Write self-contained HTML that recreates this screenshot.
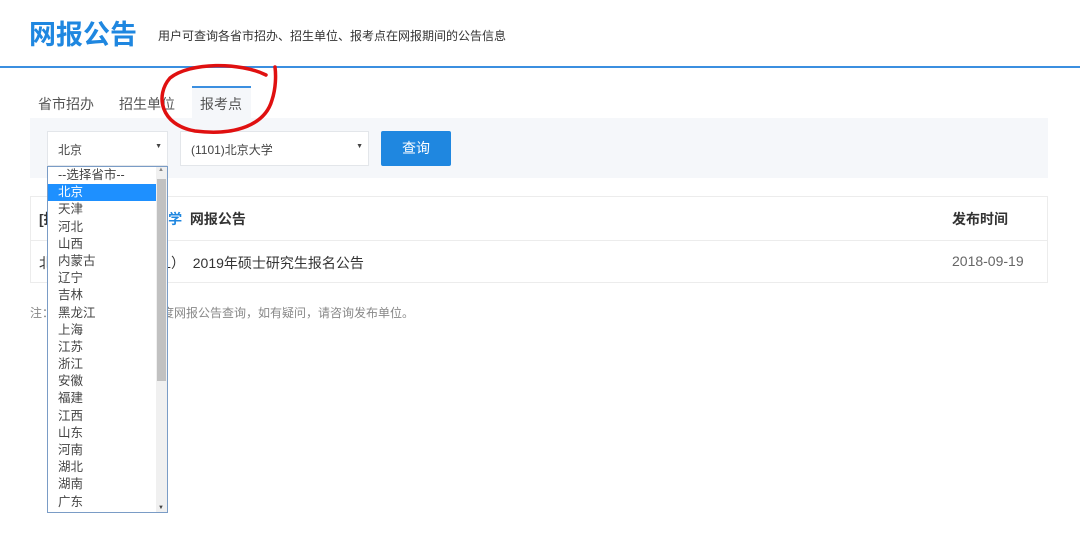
<!DOCTYPE html>
<html><head><meta charset="utf-8"><style>
*{margin:0;padding:0;box-sizing:border-box}
body{width:1080px;height:552px;background:#fff;font-family:"Liberation Sans","Noto Sans CJK SC",sans-serif;position:relative;overflow:hidden;color:#333}
.abs{position:absolute}
.title{left:29px;top:13px;font-size:27px;font-weight:bold;color:#1f87e0}
.sub{left:158px;top:27px;font-size:12px;color:#333}
.line{left:0;top:66px;width:1080px;height:2px;background:#3b8fe0}
.tab{top:94px;font-size:14px;color:#555}
.active{left:192px;top:86px;width:59px;height:32px;background:#f5f7fa;border-top:2px solid #3b8fe0}
.panel{left:30px;top:118px;width:1018px;height:60px;background:#f5f7fa}
.sel{top:131px;height:35px;background:#fff;border:1px solid #e3e6ea;font-size:12px;color:#444;padding:9px 0 0 10px}
.sel:after{content:"▼";position:absolute;right:5px;top:11px;font-size:7px;color:#444}
.btn{left:381px;top:131px;width:70px;height:35px;background:#1f87e0;color:#fff;font-size:14px;text-align:center;line-height:34px;border-radius:2px}
.table{left:30px;top:196px;width:1018px;height:87px;border:1px solid #ececec}
.table .r2{position:absolute;left:0;top:43px;width:100%;border-top:1px solid #ececec}
.th{font-size:14px;font-weight:bold;color:#333}
.note{left:30px;top:304px;font-size:12px;color:#888}
.dd{left:47px;top:166px;width:121px;height:347px;background:#fff;border:1px solid #7a9cc6;overflow:hidden}
.dd .it{height:17.2px;line-height:17px;font-size:12.5px;color:#444;padding-left:10px;width:108px}
.dd .hl{background:#1e90ff;color:#fff}
.sb{position:absolute;right:0;top:0;width:11px;height:100%;background:#f0f0f0}
.thumb{position:absolute;left:1px;top:12px;width:9px;height:202px;background:#c1c1c1}
</style></head><body>
<div class="abs title">网报公告</div>
<div class="abs sub">用户可查询各省市招办、招生单位、报考点在网报期间的公告信息</div>
<div class="abs line"></div>
<div class="abs active"></div>
<div class="abs tab" style="left:38px">省市招办</div>
<div class="abs tab" style="left:119px">招生单位</div>
<div class="abs tab" style="left:200px">报考点</div>
<div class="abs panel"></div>
<div class="abs sel" style="left:47px;width:121px">北京</div>
<div class="abs sel" style="left:180px;width:189px">(1101)北京大学</div>
<div class="abs btn">查询</div>
<div class="abs table">
 <div class="abs th" style="left:8px;top:12px">[报考点] 北京 <span style="color:#1f87e0">北京大学</span>&nbsp; 网报公告</div>
 <div class="abs th" style="left:921px;top:12px">发布时间</div>
 <div class="r2"></div>
 <div class="abs" style="left:8px;top:56px;font-size:14px">北京 北京大学（1101）&nbsp; 2019年硕士研究生报名公告</div>
 <div class="abs" style="left:921px;top:56px;font-size:14px;color:#666">2018-09-19</div>
</div>
<div class="abs note">注：此处提供报考点本年度网报公告查询，如有疑问，请咨询发布单位。</div>
<div class="abs dd">
<div class="it">--选择省市--</div><div class="it hl">北京</div><div class="it">天津</div><div class="it">河北</div><div class="it">山西</div><div class="it">内蒙古</div><div class="it">辽宁</div><div class="it">吉林</div><div class="it">黑龙江</div><div class="it">上海</div><div class="it">江苏</div><div class="it">浙江</div><div class="it">安徽</div><div class="it">福建</div><div class="it">江西</div><div class="it">山东</div><div class="it">河南</div><div class="it">湖北</div><div class="it">湖南</div><div class="it">广东</div>
<div class="sb"><div class="thumb"></div><span style="position:absolute;left:2px;top:0;font-size:6px;color:#888">▲</span><span style="position:absolute;left:2px;bottom:1px;font-size:6px;color:#444">▼</span></div>
</div>
<svg class="abs" style="left:0;top:0" width="1080" height="552"><path d="M266,75 C240,62 190,62 170,78 C155,95 160,125 195,131 C235,136 265,125 272,100 C276,88 276,75 275,67" fill="none" stroke="#e01010" stroke-width="3.5" stroke-linecap="round"/></svg>
</body></html>
